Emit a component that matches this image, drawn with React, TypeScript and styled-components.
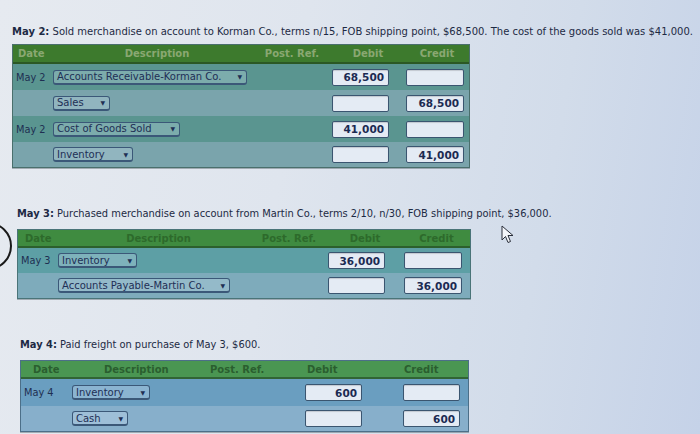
import React from "react";
import styled, { createGlobalStyle } from "styled-components";

const Global = createGlobalStyle`
  html, body { margin: 0; padding: 0; }
  body {
    width: 700px;
    height: 434px;
    overflow: hidden;
    font-family: "DejaVu Sans", Verdana, sans-serif;
    background: linear-gradient(100deg, #e6eaf0 0%, #dfe5ee 40%, #d2dcea 75%, #c5d2e8 100%);
  }
`;

type Palette = {
  header: string;
  headerText: string;
  dark: string;
  light: string;
  border: string;
  select: string;
};

const palettes: Record<string, Palette> = {
  t1: {
    header: "#3d7a2d",
    headerText: "#8aa872",
    dark: "#5a9590",
    light: "#7aa4ac",
    border: "#4a6f6c",
    select: "rgba(190,215,225,0.35)",
  },
  t2: {
    header: "#3f8b40",
    headerText: "#2d6a2b",
    dark: "#5d9fa5",
    light: "#7eabbb",
    border: "#4a7478",
    select: "rgba(190,215,230,0.35)",
  },
  t3: {
    header: "#4a9652",
    headerText: "#2a5e2f",
    dark: "#6a9ec0",
    light: "#87afcb",
    border: "#4c6f88",
    select: "rgba(200,220,240,0.35)",
  },
};

const Page = styled.div`
  position: relative;
  width: 700px;
  height: 434px;
  padding-top: 26px;
  box-sizing: border-box;
`;

const Section = styled.section<{ $indent: number; $gap: number }>`
  margin-left: ${(p) => p.$indent}px;
  margin-bottom: ${(p) => p.$gap}px;
`;

const Title = styled.p<{ $space: number; $size: number }>`
  margin: 0 0 ${(p) => p.$space}px 0;
  font-size: ${(p) => p.$size}px;
  line-height: 12px;
  color: #1d2a44;
  white-space: nowrap;
  b { font-weight: 700; }
`;

const Table = styled.div<{ $cols: string; $pal: Palette }>`
  display: grid;
  grid-template-columns: ${(p) => p.$cols};
  width: max-content;
  border: 1px solid ${(p) => p.$pal.border};
  box-shadow: 0 1px 0 rgba(40, 60, 70, 0.35);
`;

const HeaderCell = styled.div<{ $pal: Palette; $h: number; $align: string; $pad: number }>`
  background: ${(p) => p.$pal.header};
  border-bottom: 2px solid rgba(30, 60, 30, 0.55);
  height: ${(p) => p.$h}px;
  display: flex;
  align-items: center;
  justify-content: ${(p) => p.$align};
  padding-left: ${(p) => p.$pad}px;
  box-sizing: border-box;
  font-size: 10px;
  font-weight: 700;
  color: ${(p) => p.$pal.headerText};
  white-space: nowrap;
`;

const Cell = styled.div<{ $bg: string; $h: number; $pad?: number }>`
  background: ${(p) => p.$bg};
  height: ${(p) => p.$h}px;
  display: flex;
  align-items: center;
  padding-left: ${(p) => p.$pad ?? 0}px;
  box-sizing: border-box;
`;

const DateText = styled.span`
  font-size: 9.8px;
  color: #1e2f52;
  white-space: nowrap;
`;

const Select = styled.div<{ $w: number; $bg: string }>`
  width: ${(p) => p.$w}px;
  height: 15px;
  box-sizing: border-box;
  border: 1px solid #3b5878;
  border-bottom-width: 2px;
  border-radius: 3px;
  background: ${(p) => p.$bg};
  display: flex;
  align-items: center;
  justify-content: space-between;
  padding: 0 4px 0 3px;
  font-size: 10px;
  color: #1e2f55;
  white-space: nowrap;
`;

const Arrow = styled.span`
  font-size: 6px;
  color: #1e2f55;
`;

const AmountBox = styled.div<{ $w: number; $ml: number }>`
  width: ${(p) => p.$w}px;
  height: 17px;
  margin-left: ${(p) => p.$ml}px;
  box-sizing: border-box;
  background: #e4ebf4;
  border: 1.5px solid #3a5570;
  border-radius: 2px;
  box-shadow: inset 0 1px 1px rgba(0, 0, 0, 0.15);
  display: flex;
  align-items: center;
  justify-content: flex-end;
  padding-right: 4px;
  font-size: 10.5px;
  font-weight: 700;
  color: #1b2a52;
`;

const Circle = styled.svg`
  position: absolute;
  left: 0;
  top: 220px;
`;

const Cursor = styled.svg`
  position: absolute;
  left: 501px;
  top: 225px;
`;

type Row = { date?: string; account: string; selW: number; debit?: string; credit?: string; h: number };

type HeaderSpec = { label: string; align: string; pad: number };

type TableProps = {
  pal: Palette;
  cols: number[];
  headerH: number;
  headers: HeaderSpec[];
  rows: Row[];
  datePad: number;
  descPad: number;
  boxW: [number, number];
  boxMl: [number, number];
};

function Journal({ pal, cols, headerH, headers, rows, datePad, descPad, boxW, boxMl }: TableProps) {
  return (
    <Table $cols={cols.map((c) => c + "px").join(" ")} $pal={pal}>
      {headers.map((h) => (
        <HeaderCell key={h.label} $pal={pal} $h={headerH} $align={h.align} $pad={h.pad}>
          {h.label}
        </HeaderCell>
      ))}
      {rows.map((r, i) => {
        const bg = i % 2 === 0 ? pal.dark : pal.light;
        return (
          <React.Fragment key={i}>
            <Cell $bg={bg} $h={r.h} $pad={datePad}>
              {r.date && <DateText>{r.date}</DateText>}
            </Cell>
            <Cell $bg={bg} $h={r.h} $pad={descPad}>
              <Select $w={r.selW} $bg={pal.select}>
                <span>{r.account}</span>
                <Arrow>▼</Arrow>
              </Select>
            </Cell>
            <Cell $bg={bg} $h={r.h} />
            <Cell $bg={bg} $h={r.h}>
              <AmountBox $w={boxW[0]} $ml={boxMl[0]}>{r.debit ?? ""}</AmountBox>
            </Cell>
            <Cell $bg={bg} $h={r.h}>
              <AmountBox $w={boxW[1]} $ml={boxMl[1]}>{r.credit ?? ""}</AmountBox>
            </Cell>
          </React.Fragment>
        );
      })}
    </Table>
  );
}

const centerHeaders = (datePad: number): HeaderSpec[] => [
  { label: "Date", align: "flex-start", pad: datePad },
  { label: "Description", align: "center", pad: 8 },
  { label: "Post. Ref.", align: "center", pad: 0 },
  { label: "Debit", align: "center", pad: 0 },
  { label: "Credit", align: "center", pad: 0 },
];

export default function App() {
  return (
    <>
      <Global />
      <Page>
        <Section $indent={12} $gap={40}>
          <Title $space={6} $size={10}>
            <b>May 2:</b> Sold merchandise on account to Korman Co., terms n/15, FOB shipping point, $68,500. The cost of the goods sold was $41,000.
          </Title>
          <Journal
            pal={palettes.t1}
            cols={[40, 200, 78, 74, 64]}
            headerH={19}
            headers={centerHeaders(5)}
            datePad={3}
            descPad={0}
            boxW={[57, 58]}
            boxMl={[1, 1]}
            rows={[
              { date: "May 2", account: "Accounts Receivable-Korman Co.", selW: 194, debit: "68,500", h: 26 },
              { account: "Sales", selW: 57, credit: "68,500", h: 26 },
              { date: "May 2", account: "Cost of Goods Sold", selW: 127, debit: "41,000", h: 26 },
              { account: "Inventory", selW: 80, credit: "41,000", h: 25 },
            ]}
          />
        </Section>
        <Section $indent={17} $gap={40}>
          <Title $space={9} $size={9.9}>
            <b>May 3:</b> Purchased merchandise on account from Martin Co., terms 2/10, n/30, FOB shipping point, $36,000.
          </Title>
          <Journal
            pal={palettes.t2}
            cols={[40, 193, 76, 76, 67]}
            headerH={18}
            headers={centerHeaders(7)}
            datePad={3}
            descPad={0}
            boxW={[57, 58]}
            boxMl={[1, 1]}
            rows={[
              { date: "May 3", account: "Inventory", selW: 79, debit: "36,000", h: 25 },
              { account: "Accounts Payable-Martin Co.", selW: 172, credit: "36,000", h: 25 },
            ]}
          />
        </Section>
        <Section $indent={20} $gap={0}>
          <Title $space={9} $size={9.9}>
            <b>May 4:</b> Paid freight on purchase of May 3, $600.
          </Title>
          <Journal
            pal={palettes.t3}
            cols={[51, 129, 68, 133, 66]}
            headerH={18}
            headers={[
              { label: "Date", align: "flex-start", pad: 12 },
              { label: "Description", align: "flex-start", pad: 32 },
              { label: "Post. Ref.", align: "flex-start", pad: 9 },
              { label: "Debit", align: "flex-start", pad: 38 },
              { label: "Credit", align: "flex-start", pad: 2 },
            ]}
            datePad={3}
            descPad={0}
            boxW={[57, 57]}
            boxMl={[36, 1]}
            rows={[
              { date: "May 4", account: "Inventory", selW: 78, debit: "600", h: 27 },
              { account: "Cash", selW: 56, credit: "600", h: 25 },
            ]}
          />
        </Section>
        <Circle width="16" height="56" viewBox="0 0 16 56">
          <circle cx="-12" cy="26" r="23" fill="none" stroke="#1a1a1a" strokeWidth="2" />
        </Circle>
        <Cursor width="14" height="20" viewBox="0 0 14 20">
          <path d="M1 1 L1 15 L4.5 11.5 L7 17.5 L9.5 16.5 L7 10.5 L12 10.5 Z" fill="#f4f6fa" stroke="#2a2f3a" strokeWidth="1" strokeLinejoin="round" />
        </Cursor>
      </Page>
    </>
  );
}
